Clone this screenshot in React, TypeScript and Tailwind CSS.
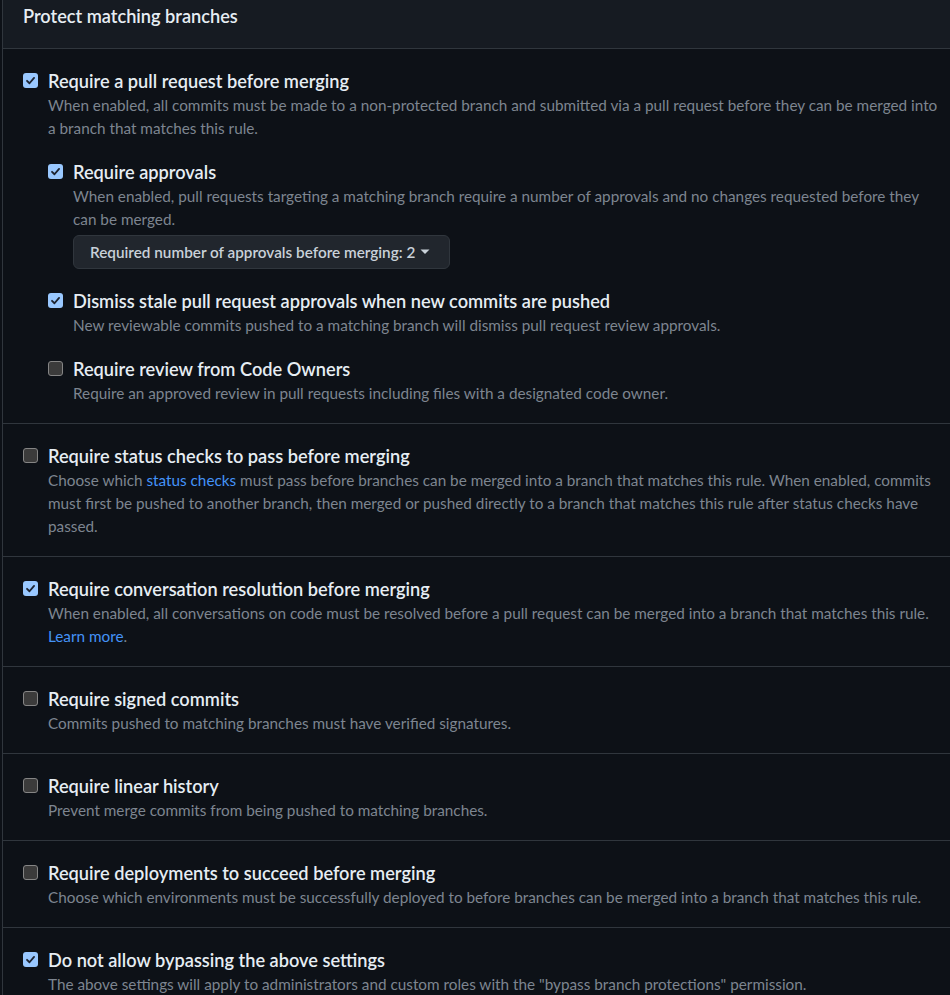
type Item = {
  title: string
  checked: boolean
  desc: React.ReactNode
}

function Checkbox({ checked }: { checked: boolean }) {
  if (checked) {
    return (
      <span className="mt-[3.5px] flex h-[15px] w-[15px] shrink-0 items-center justify-center rounded-[3px] bg-[#99c8ff]">
        <svg width="11" height="11" viewBox="0 0 12 12" fill="none">
          <path d="M2.2 6.3 L4.9 9 L9.9 3.2" stroke="#1c2330" strokeWidth="2" strokeLinecap="round" strokeLinejoin="round" />
        </svg>
      </span>
    )
  }
  return (
    <span className="mt-[3.5px] block h-[15px] w-[15px] shrink-0 rounded-[3px] border border-[#858585] bg-[#3b3b3b]" />
  )
}

function Option({ title, checked, desc, children }: Item & { children?: React.ReactNode }) {
  return (
    <div className="flex gap-[10px]">
      <Checkbox checked={checked} />
      <div className="min-w-0 flex-1">
        <div className="text-[18.2px] leading-[24px] font-semibold text-[#e6edf3]">{title}</div>
        <p className="mt-[1px] text-[15.3px] leading-[23px] text-[#7d8590]">{desc}</p>
        {children}
      </div>
    </div>
  )
}

function Section({ children }: { children: React.ReactNode }) {
  return <div className="border-b border-[#30363d] pt-[20px] pb-[18px] pl-[20px] pr-[8px]">{children}</div>
}

export default function App() {
  return (
    <div className="min-h-screen bg-[#0d1117] pl-[2px] font-['Lato','Liberation_Sans',sans-serif]">
      <div className="border-l border-[#30363d]">
        <div className="h-[49px] border-b border-[#30363d] bg-[#161b22] pt-[4px] pl-[20px]">
          <h2 className="text-[18.2px] leading-[24px] font-semibold text-[#e6edf3]">Protect matching branches</h2>
        </div>

        <Section>
          <Option
            checked
            title="Require a pull request before merging"
            desc="When enabled, all commits must be made to a non-protected branch and submitted via a pull request before they can be merged into a branch that matches this rule."
          >
            <div className="mt-[20px] flex flex-col gap-[20px]">
              <Option
                checked
                title="Require approvals"
                desc="When enabled, pull requests targeting a matching branch require a number of approvals and no changes requested before they can be merged."
              >
                <button className="mt-[4px] flex h-[34px] items-center gap-[5px] rounded-md border border-[#30363d] bg-[#21262d] pl-[16px] pr-[19px] text-[15.3px] font-semibold text-[#c9d1d9]">
                  Required number of approvals before merging: 2
                  <svg width="10" height="6" viewBox="0 0 10 6">
                    <path d="M0.5 0.5 L5 5 L9.5 0.5 Z" fill="#c9d1d9" />
                  </svg>
                </button>
              </Option>
              <Option
                checked
                title="Dismiss stale pull request approvals when new commits are pushed"
                desc="New reviewable commits pushed to a matching branch will dismiss pull request review approvals."
              />
              <Option
                checked={false}
                title="Require review from Code Owners"
                desc="Require an approved review in pull requests including files with a designated code owner."
              />
            </div>
          </Option>
        </Section>

        <Section>
          <Option
            checked={false}
            title="Require status checks to pass before merging"
            desc={
              <>
                Choose which <a href="#" className="text-[#4493f8]">status checks</a> must pass before branches can be
                merged into a branch that matches this rule. When enabled, commits must first be pushed to another
                branch, then merged or pushed directly to a branch that matches this rule after status checks have
                passed.
              </>
            }
          />
        </Section>

        <Section>
          <Option
            checked
            title="Require conversation resolution before merging"
            desc={
              <>
                When enabled, all conversations on code must be resolved before a pull request can be merged into a
                branch that matches this rule. <a href="#" className="text-[#4493f8]">Learn more</a>.
              </>
            }
          />
        </Section>

        <Section>
          <Option
            checked={false}
            title="Require signed commits"
            desc="Commits pushed to matching branches must have verified signatures."
          />
        </Section>

        <Section>
          <Option
            checked={false}
            title="Require linear history"
            desc="Prevent merge commits from being pushed to matching branches."
          />
        </Section>

        <Section>
          <Option
            checked={false}
            title="Require deployments to succeed before merging"
            desc="Choose which environments must be successfully deployed to before branches can be merged into a branch that matches this rule."
          />
        </Section>

        <Section>
          <Option
            checked
            title="Do not allow bypassing the above settings"
            desc='The above settings will apply to administrators and custom roles with the "bypass branch protections" permission.'
          />
        </Section>
      </div>
    </div>
  )
}
